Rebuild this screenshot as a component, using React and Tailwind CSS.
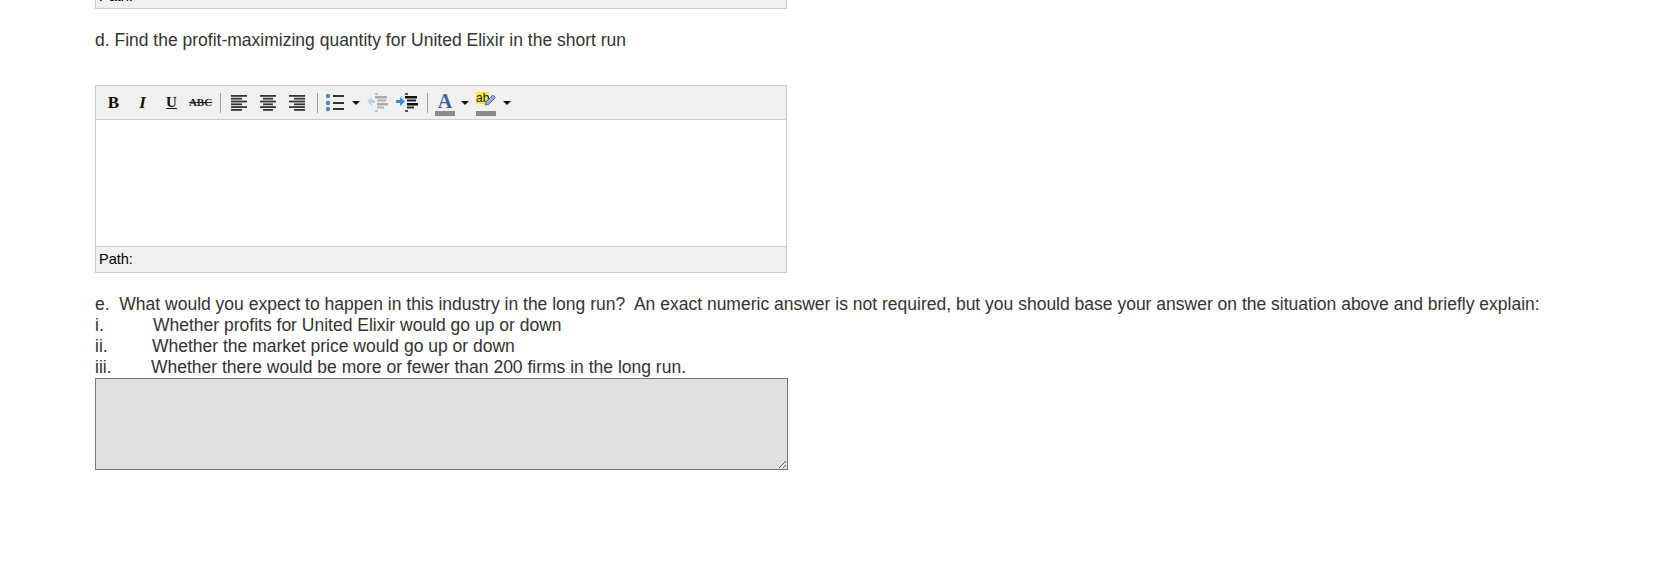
import React from 'react';

const Btn = ({ w = 'w-[29px]', children }) => (
  <span className={`flex h-[30px] shrink-0 items-center justify-center ${w}`}>{children}</span>
);

const Sep = ({ className }) => <span className={`h-[20px] w-px shrink-0 bg-[#9a9a9a] ${className}`} />;

const Caret = ({ className = '' }) => (
  <span className={`flex h-[30px] w-[12px] shrink-0 items-center justify-center ${className}`}>
    <svg width="8" height="4" viewBox="0 0 8 4"><path d="M0 0h8L4 4z" fill="#111" /></svg>
  </span>
);

const Lines = ({ rows }) => (
  <svg width="18" height="18" viewBox="0 0 18 18">
    {rows.map(([x, w], i) => (
      <rect key={i} x={x} y={1 + i * 2.8} width={w} height="1.8" fill="#333" />
    ))}
  </svg>
);

const leftRows = [[1, 16], [1, 11], [1, 16], [1, 11], [1, 16], [1, 11]];
const centerRows = [[1, 16], [4, 10], [1, 16], [4, 10], [1, 16], [4, 10]];
const rightRows = [[1, 16], [6, 11], [1, 16], [6, 11], [1, 16], [6, 11]];

const BulletList = () => (
  <svg width="20" height="18" viewBox="0 0 20 18">
    {[2, 9, 15].map((y) => (
      <g key={y}>
        <circle cx="3" cy={y} r="2.2" fill="#5b82b8" />
        <rect x="8" y={y - 1} width="11" height="2" fill="#333" />
      </g>
    ))}
  </svg>
);

const Indent = ({ muted, flip }) => (
  <svg width="22" height="20" viewBox="0 0 22 20" opacity={muted ? 0.3 : 1}>
    <rect x="9" y="0" width="3" height="2" fill="#555" />
    <rect x="9" y="17" width="3" height="2" fill="#555" />
    <rect x="9" y="3" width="12" height="2.5" fill="#111" />
    <rect x="11" y="6.5" width="9" height="2" fill="#222" />
    <rect x="11" y="10" width="11" height="2.5" fill="#111" />
    <rect x="11" y="13.5" width="7" height="2" fill="#333" />
    {flip ? (
      <path d="M1 8.5l5-4.5v3h3v3H6v3z" fill="#3d8be0" />
    ) : (
      <path d="M9 8.5L4 4v3H0v3h4v3z" fill="#3d8be0" />
    )}
  </svg>
);

const Highlight = () => (
  <span className="relative mt-[3px] h-[24px] w-[20px]">
    <span className="absolute left-0 top-0 h-[12px] w-[13px] bg-[#f2e64a] text-center font-['Liberation_Sans',sans-serif] text-[12px] leading-[12px] text-[#222]">ab</span>
    <svg className="absolute left-[7px] top-[1px]" width="14" height="14" viewBox="0 0 14 14">
      <path d="M2 12l1-3 7-7 2.5 2.5-7 7z" fill="#8fb0d6" stroke="#4a6f9f" strokeWidth="1" />
    </svg>
    <span className="absolute bottom-0 left-0 h-[5px] w-[20px] bg-[#8a8a8a]" />
  </span>
);

const FontColor = () => (
  <span className="relative mt-[3px] flex h-[24px] w-[20px] justify-center">
    <span className="font-['Liberation_Serif',serif] text-[20px] font-bold leading-[19px] text-[#3f5f97]">A</span>
    <span className="absolute bottom-0 left-0 h-[5px] w-[20px] bg-[#8a8a8a]" />
  </span>
);

const Editor = () => (
  <div className="w-[692px] border border-[#cccccc] bg-white">
    <div className="flex h-[34px] items-center border-b border-[#cccccc] bg-[#f0f0ee] pl-[3px]">
      <Btn><span className="font-['Liberation_Serif',serif] text-[17px] font-bold text-[#111]">B</span></Btn>
      <Btn><span className="font-['Liberation_Serif',serif] text-[17px] font-bold italic text-[#111]">I</span></Btn>
      <Btn><span className="font-['Liberation_Serif',serif] text-[15px] font-bold text-[#111] underline">U</span></Btn>
      <Btn><span className="font-['Liberation_Serif',serif] text-[11px] font-bold text-[#222] line-through">ABC</span></Btn>
      <Sep className="ml-[5px] mr-[3px]" />
      <Btn><Lines rows={leftRows} /></Btn>
      <Btn><Lines rows={centerRows} /></Btn>
      <Btn><Lines rows={rightRows} /></Btn>
      <Sep className="ml-[6px] mr-[4px]" />
      <Btn w="w-[26px]"><BulletList /></Btn>
      <Caret className="ml-[2px]" />
      <Btn w="w-[30px]"><Indent muted flip /></Btn>
      <Btn><Indent /></Btn>
      <Sep className="ml-[6px] mr-[4px]" />
      <Btn w="w-[26px]"><FontColor /></Btn>
      <Caret className="ml-[1px]" />
      <Btn w="w-[30px]"><Highlight /></Btn>
      <Caret />
    </div>
    <div className="h-[126px] bg-white" />
    <div className="flex h-[26px] items-center border-t border-[#cccccc] bg-[#f0f0ee] pl-[3px] text-[14.5px] text-black">Path:</div>
  </div>
);

export default function App() {
  return (
    <div className="h-[585px] overflow-hidden bg-white pl-[95px] font-['Liberation_Sans',Arial,sans-serif] text-[17.5px] leading-[21px] text-[#333333]">
      <div className="mt-[-16px] flex h-[25px] w-[692px] items-end border border-[#cccccc] bg-[#f0f0ee] pb-[4px] pl-[3px] text-[14.5px] leading-[16px] text-black">Path:</div>
      <p className="mt-[21px] h-[21px]">d. Find the profit-maximizing quantity for United Elixir in the short run</p>
      <div className="mt-[34px]"><Editor /></div>
      <div className="mt-[21px] whitespace-pre">
        <p>e.  What would you expect to happen in this industry in the long run?  An exact numeric answer is not required, but you should base your answer on the situation above and briefly explain:</p>
        <p className="flex"><span className="w-[58px]">i.</span>Whether profits for United Elixir would go up or down</p>
        <p className="flex"><span className="w-[57px]">ii.</span>Whether the market price would go up or down</p>
        <p className="flex"><span className="w-[56px]">iii.</span>Whether there would be more or fewer than 200 firms in the long run.</p>
      </div>
      <textarea disabled className="block h-[92px] w-[693px] border border-[#767676] bg-[#dfdfdf]" />
    </div>
  );
}
